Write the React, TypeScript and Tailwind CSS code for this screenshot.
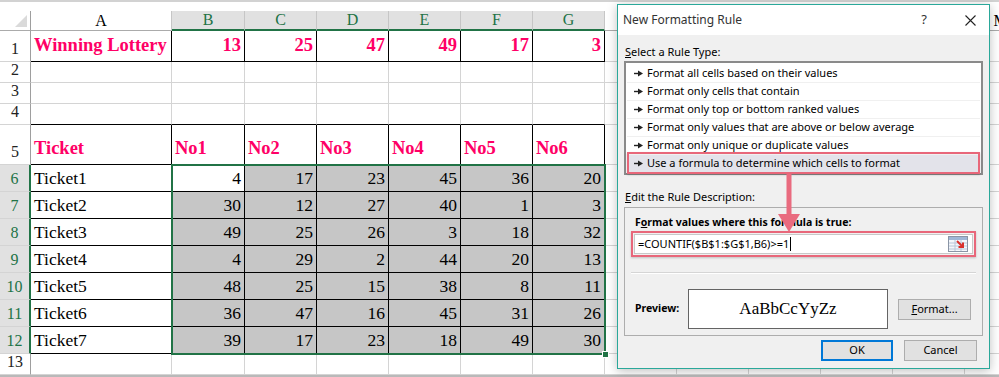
import React from 'react';

const COLS = [141, 73, 72, 72, 72, 72, 72, 72, 72, 72, 72, 72, 72];
// H..L sit under the dialog, so their letters are never seen
const LETTERS = ['A', 'B', 'C', 'D', 'E', 'F', 'G', '', '', '', '', '', 'M'];

const ROW_H: Record<number, number> = {
  1: 31, 2: 21, 3: 21, 4: 21, 5: 40,
  6: 27, 7: 27, 8: 27, 9: 27, 10: 27, 11: 27, 12: 27, 13: 21,
};

const WINNING = [13, 25, 47, 49, 17, 3];

const TICKETS: [string, number[]][] = [
  ['Ticket1', [4, 17, 23, 45, 36, 20]],
  ['Ticket2', [30, 12, 27, 40, 1, 3]],
  ['Ticket3', [49, 25, 26, 3, 18, 32]],
  ['Ticket4', [4, 29, 2, 44, 20, 13]],
  ['Ticket5', [48, 25, 15, 38, 8, 11]],
  ['Ticket6', [36, 47, 16, 45, 31, 26]],
  ['Ticket7', [39, 17, 23, 18, 49, 30]],
];

const RULE_TYPES = [
  'Format all cells based on their values',
  'Format only cells that contain',
  'Format only top or bottom ranked values',
  'Format only values that are above or below average',
  'Format only unique or duplicate values',
  'Use a formula to determine which cells to format',
];

const bordered = (r: number, c: number) => c >= 0 && c <= 6 && (r === 1 || (r >= 5 && r <= 12));
const selectedRow = (r: number) => r >= 6 && r <= 12;

type Content = { text: string; kind: 'pinkLeft' | 'pinkRight' | 'left' | 'right' } | null;

function cellContent(r: number, c: number): Content {
  if (r === 1) {
    if (c === 0) return { text: 'Winning Lottery', kind: 'pinkLeft' };
    if (c >= 1 && c <= 6) return { text: String(WINNING[c - 1]), kind: 'pinkRight' };
  }
  if (r === 5) {
    if (c === 0) return { text: 'Ticket', kind: 'pinkLeft' };
    if (c >= 1 && c <= 6) return { text: 'No' + c, kind: 'pinkLeft' };
  }
  if (selectedRow(r)) {
    const [name, vals] = TICKETS[r - 6];
    if (c === 0) return { text: name, kind: 'left' };
    if (c >= 1 && c <= 6) return { text: String(vals[c - 1]), kind: 'right' };
  }
  return null;
}

const Cell: React.FC<{ r: number; c: number }> = ({ r, c }) => {
  const rightBlack = bordered(r, c) || bordered(r, c + 1);
  const bottomBlack = bordered(r, c) || bordered(r + 1, c);
  const shaded = selectedRow(r) && c >= 1 && c <= 6 && !(r === 6 && c === 1);
  const content = cellContent(r, c);
  const kind = content?.kind;
  return (
    <div
      style={{ width: COLS[c] }}
      className={[
        'shrink-0 h-full border-r border-b flex items-end overflow-hidden whitespace-nowrap',
        rightBlack ? 'border-r-black' : 'border-r-[#d4d4d4]',
        bottomBlack ? 'border-b-black' : 'border-b-[#d4d4d4]',
        shaded ? 'bg-[#c6c6c6]' : 'bg-white',
        kind === 'pinkRight' || kind === 'right' ? 'justify-end pr-[3px]' : 'justify-start pl-[3px]',
        kind === 'pinkLeft' || kind === 'pinkRight'
          ? 'text-[18.5px] font-bold text-[#ff0066] pb-[1px]'
          : 'text-[17.5px] text-black',
      ].join(' ')}
    >
      {content?.text}
    </div>
  );
};

const RowHeader: React.FC<{ r: number }> = ({ r }) => (
  <div
    className={[
      'w-[31px] shrink-0 h-full border-b border-b-[#d4d4d4] flex items-end justify-center text-[16px]',
      selectedRow(r)
        ? 'bg-[#e1e1e1] text-[#217346] border-r-2 border-r-[#217346]'
        : 'bg-white text-[#222] border-r border-r-[#9e9e9e]',
    ].join(' ')}
  >
    {r}
  </div>
);

const Sheet: React.FC = () => (
  <div className="flex flex-col font-['Liberation_Serif',serif]">
    <div className="h-[11px] border-t-2 border-t-[#d2d2d2] bg-white" />
    {/* column headers */}
    <div className="flex h-[20px]">
      <div className="w-[31px] shrink-0 h-full border-r border-r-[#9e9e9e] border-b border-b-[#ababab] bg-white relative">
        <div className="absolute right-[3px] bottom-[3px] w-0 h-0 border-l-[12px] border-l-transparent border-b-[12px] border-b-[#dadada]" />
      </div>
      {LETTERS.map((l, i) => {
        const sel = i >= 1 && i <= 6;
        return (
          <div
            key={i}
            style={{ width: COLS[i] }}
            className={[
              'shrink-0 h-full border-r border-r-[#c6c6c6] flex items-center justify-center text-[16px]',
              sel
                ? 'bg-[#e1e1e1] text-[#217346] border-b-2 border-b-[#217346]'
                : 'bg-white text-black border-b border-b-[#ababab]',
            ].join(' ')}
          >
            {l}
          </div>
        );
      })}
    </div>
    {Object.keys(ROW_H).map((k) => {
      const r = Number(k);
      return (
        <div key={r} className="flex" style={{ height: ROW_H[r] }}>
          <RowHeader r={r} />
          {COLS.map((_, c) => (
            <Cell key={c} r={r} c={c} />
          ))}
        </div>
      );
    })}
    <div className="h-[2px] bg-[#b9b9b9]" />
  </div>
);

const RuleArrow: React.FC = () => (
  <svg width="9" height="7" viewBox="0 0 9 7" className="shrink-0">
    <rect x="0" y="2.8" width="5" height="1.4" fill="#222" />
    <path d="M4 0.5 L9 3.5 L4 6.5 Z" fill="#222" />
  </svg>
);

const CollapseIcon: React.FC = () => (
  <svg width="22" height="18" viewBox="0 0 22 18">
    <rect x="1.5" y="1.5" width="19" height="15" fill="#f4f7fb" stroke="#8a95a5" />
    <rect x="2" y="2" width="18" height="3" fill="#9fb6d6" />
    <line x1="2" y1="8" x2="20" y2="8" stroke="#b9c6d8" />
    <line x1="2" y1="11" x2="20" y2="11" stroke="#b9c6d8" />
    <line x1="2" y1="14" x2="20" y2="14" stroke="#b9c6d8" />
    <line x1="8" y1="5" x2="8" y2="16" stroke="#b9c6d8" />
    <line x1="14" y1="5" x2="14" y2="16" stroke="#b9c6d8" />
    <path d="M10 6 L16 12 M16 7.5 L16 12 L11.5 12" stroke="#d9302c" strokeWidth="2" fill="none" />
  </svg>
);

const Btn: React.FC<{ children: React.ReactNode; className?: string }> = ({ children, className }) => (
  <div
    className={
      'h-[21px] flex items-center justify-center bg-[#e1e1e1] text-[11px] text-black ' + (className ?? '')
    }
  >
    {children}
  </div>
);

const Dialog: React.FC = () => (
  <div className="absolute left-[617px] top-[4px] w-[373px] h-[365px] border border-[#2aa89a] bg-[#f0f0f0] shadow-[0_2px_10px_rgba(0,0,0,0.25)] flex flex-col font-['Noto_Sans',sans-serif] text-[11px] text-black">
    <div className="h-[30px] bg-white flex items-center pl-[5px] shrink-0">
      <span className="flex-1 text-[12px] text-[#333]">New Formatting Rule</span>
      <span className="text-[13px] text-[#333] mr-[38px]">?</span>
      <svg width="11" height="11" viewBox="0 0 11 11" className="mr-[13px]">
        <path d="M0.5 0.5 L10.5 10.5 M10.5 0.5 L0.5 10.5" stroke="#222" strokeWidth="1.1" />
      </svg>
    </div>

    <div className="flex flex-col px-[6px] pt-[9px] relative">
      <div className="h-[16px] leading-[16px] pl-[1px]">
        <span className="underline">S</span>elect a Rule Type:
      </div>

      <div className="mt-[1px] h-[114px] border-2 border-[#8a8a8a] bg-white pt-[2px] px-[1px] relative">
        {RULE_TYPES.map((t, i) => (
          <div
            key={t}
            className={[
              'h-[18px] flex items-center gap-[4px] pl-[7px] border-b border-b-[#f0f0f0]',
              i === RULE_TYPES.length - 1 ? 'bg-[#e3e3ea]' : '',
            ].join(' ')}
          >
            <RuleArrow />
            <span>{t}</span>
          </div>
        ))}
        <div className="absolute left-[1px] top-[89px] w-[353px] h-[22px] border-2 border-[#e8677a] shadow-[0_1px_2px_rgba(0,0,0,0.2)]" />
      </div>

      <div className="mt-[14px] h-[16px] leading-[16px] pl-[1px]">
        <span className="underline">E</span>dit the Rule Description:
      </div>

      <div className="mt-[2px] border border-[#adadad] px-[6px] pt-[6px] pb-[6px] flex flex-col">
        <div className="h-[16px] leading-[16px] font-bold text-[10.5px] pl-[4px]">
          F<span className="underline">o</span>rmat values where this formula is true:
        </div>
        <div className="mt-[1px] h-[26px] border-2 border-[#e8677a] p-[1px] shadow-[0_1px_2px_rgba(0,0,0,0.2)]">
          <div className="h-full bg-white border border-[#c8c8c8] flex items-center pl-[3px] pr-[3px]">
            <span className="flex-1 flex items-center">
              =COUNTIF($B$1:$G$1,B6)&gt;=1
              <span className="inline-block w-[1px] h-[14px] bg-black ml-[1px]" />
            </span>
            <CollapseIcon />
          </div>
        </div>
        <div className="mt-[15px] h-[2px] border-t border-t-[#d5d5d5] border-b border-b-white" />
        <div className="mt-[15px] h-[40px] flex items-center">
          <span className="w-[57px] pl-[4px] font-bold text-[10.5px]">Preview:</span>
          <div className="w-[200px] h-[40px] bg-white border border-[#646464] flex items-center justify-center font-['Liberation_Serif',serif] text-[17px]">
            AaBbCcYyZz
          </div>
          <Btn className="ml-[10px] w-[73px] border border-[#adadad]">
            <span className="underline">F</span>ormat...
          </Btn>
        </div>
      </div>

      <div className="mt-[4px] flex justify-end gap-[11px] pr-[6px]">
        <Btn className="w-[72px] border-2 border-[#0078d7]">OK</Btn>
        <Btn className="w-[73px] border border-[#adadad]">Cancel</Btn>
      </div>

      {/* annotation arrow from the chosen rule to the formula box */}
      <svg width="26" height="60" viewBox="0 0 26 60" className="absolute left-[158px] top-[139px]">
        <rect x="10.5" y="0" width="5" height="44" fill="#e96b7f" />
        <path d="M2 40 L24 40 L13 58 Z" fill="#e96b7f" />
      </svg>
    </div>
  </div>
);

export default function App() {
  return (
    <div className="relative w-[999px] h-[377px] overflow-hidden bg-white">
      <Sheet />
      {/* selection outline B6:G12 */}
      <div className="absolute left-[171px] top-[164px] w-[435px] h-[191px] border-2 border-[#217346]" />
      <div className="absolute left-[602px] top-[351px] w-[7px] h-[7px] bg-[#217346] border border-white" />
      <Dialog />
    </div>
  );
}
